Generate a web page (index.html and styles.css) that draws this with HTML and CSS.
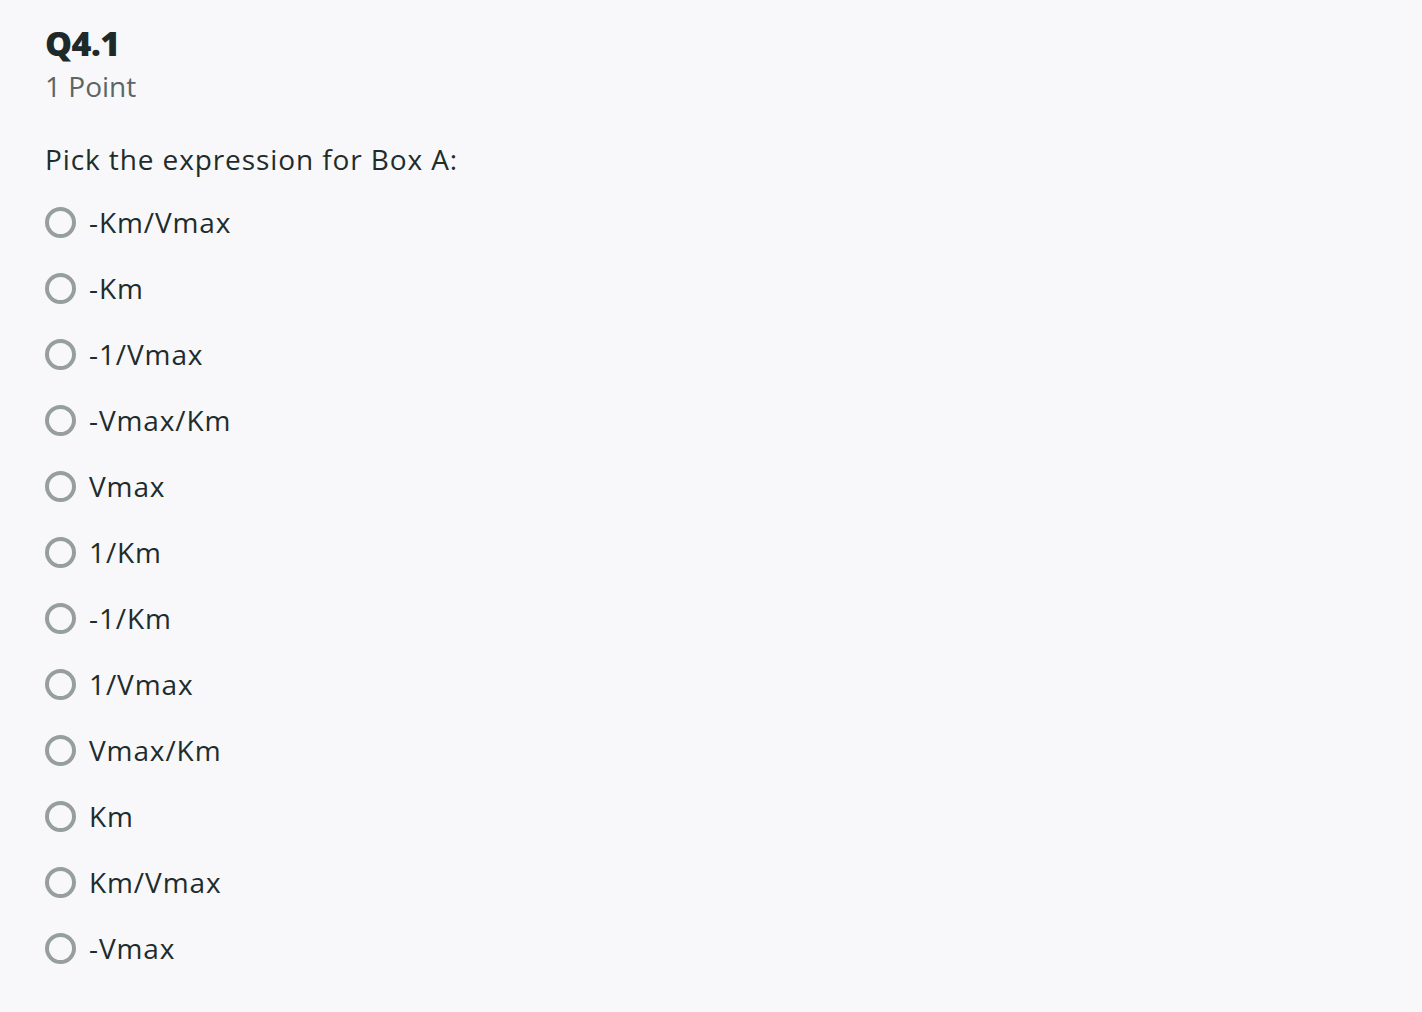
FILE: index.html
```html
<!DOCTYPE html>
<html>
<head>
<meta charset="utf-8">
<link rel="stylesheet" href="styles.css">
</head>
<body>
<main class="question">
  <h1 class="q-title">Q4.1</h1>
  <div class="q-points">1 Point</div>
  <p class="q-prompt">Pick the expression for Box A:</p>
  <ul class="options">
    <li class="option"><span class="radio"></span><span class="label">-Km/Vmax</span></li>
    <li class="option"><span class="radio"></span><span class="label">-Km</span></li>
    <li class="option"><span class="radio"></span><span class="label">-1/Vmax</span></li>
    <li class="option"><span class="radio"></span><span class="label">-Vmax/Km</span></li>
    <li class="option"><span class="radio"></span><span class="label">Vmax</span></li>
    <li class="option"><span class="radio"></span><span class="label">1/Km</span></li>
    <li class="option"><span class="radio"></span><span class="label">-1/Km</span></li>
    <li class="option"><span class="radio"></span><span class="label">1/Vmax</span></li>
    <li class="option"><span class="radio"></span><span class="label">Vmax/Km</span></li>
    <li class="option"><span class="radio"></span><span class="label">Km</span></li>
    <li class="option"><span class="radio"></span><span class="label">Km/Vmax</span></li>
    <li class="option"><span class="radio"></span><span class="label">-Vmax</span></li>
  </ul>
</main>
</body>
</html>
```
FILE: styles.css
```css
html, body {
  margin: 0;
  padding: 0;
  background: #f8f8fa;
}
body {
  font-family: "Open Sans", Lato, sans-serif;
  color: #1f2c2c;
}
.question {
  padding: 22px 45px 0;
}
.q-title {
  margin: 0;
  font-size: 34px;
  font-weight: 800;
  line-height: 42px;
  letter-spacing: -0.5px;
  color: #1e2a2a;
}
.q-points {
  margin-top: 5px;
  font-size: 28px;
  line-height: 34px;
  color: #5b6666;
}
.q-prompt {
  margin: 38px 0 0;
  font-size: 28px;
  line-height: 36px;
  letter-spacing: 0.9px;
}
.options {
  list-style: none;
  margin: 12px 0 0;
  padding: 0;
}
.option {
  display: flex;
  align-items: center;
  height: 66px;
  gap: 13px;
}
.radio {
  box-sizing: border-box;
  width: 31px;
  height: 31px;
  border: 4px solid #979e9e;
  border-radius: 50%;
  flex: none;
}
.label {
  font-size: 28px;
  line-height: 34px;
  letter-spacing: 0.9px;
}
```
